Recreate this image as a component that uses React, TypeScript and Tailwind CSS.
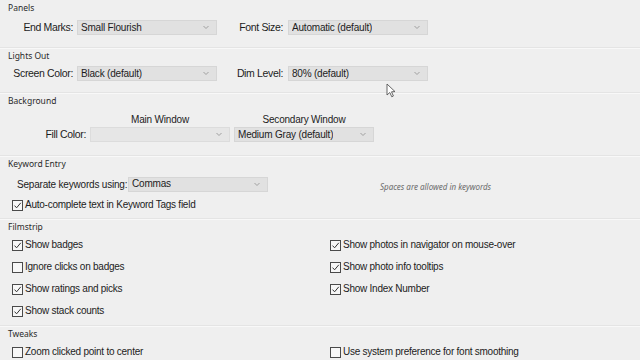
import React from "react"

const font = { fontFamily: '"Liberation Sans", Arial, sans-serif' }
const head = { fontFamily: '"Noto Sans", "Open Sans", sans-serif' }

function Chevron() {
  return (
    <svg width="8" height="5" viewBox="0 0 8 5" className="shrink-0">
      <path d="M1.5 1 L4 3.5 L6.5 1" fill="none" stroke="#a0a0a0" strokeWidth="1" />
    </svg>
  )
}

function Select({ value, w = "w-[140px]", disabled = false }: { value: string; w?: string; disabled?: boolean }) {
  return (
    <div
      className={`${w} h-[15px] shrink-0 flex items-center justify-between pl-[3px] pr-[6px] border ${
        disabled ? "bg-[#e6e6e6] border-[#dcdcdc]" : "bg-[#e1e1e1] border-[#d6d6d6]"
      }`}
    >
      <span className="text-[10px] tracking-[-0.2px] leading-none text-[#1c1c1c] truncate">{value}</span>
      <Chevron />
    </div>
  )
}

function Check({ checked, label }: { checked: boolean; label: string }) {
  return (
    <div className="h-[16px] flex items-center gap-[2px]">
      <div className="w-[11px] h-[11px] border border-[#4a4a4a] bg-[#f7f7f7] flex items-center justify-center">
        {checked && (
          <svg width="9" height="9" viewBox="0 0 9 9">
            <path d="M1.5 4.6 L3.6 6.8 L7.8 1.8" fill="none" stroke="#333" strokeWidth="1" />
          </svg>
        )}
      </div>
      <span className="text-[10px] tracking-[-0.25px] leading-none text-[#1c1c1c] whitespace-nowrap">{label}</span>
    </div>
  )
}

function Section({ title, h, children, first = false }: { title: string; h: string; children: React.ReactNode; first?: boolean }) {
  return (
    <div className={`${h} ${first ? "" : "border-t border-[#e4e4e4] shadow-[inset_0_1px_0_#f8f8f8]"}`}>
      <div className="h-[16px] pl-[8px] flex items-center text-[8.5px] text-[#2a2a2a]" style={head}>{title}</div>
      {children}
    </div>
  )
}

export default function App() {
  return (
    <div className="relative w-[640px] h-[360px] overflow-hidden bg-[#efefef] text-[#1c1c1c]" style={font}>
      <Section title="Panels" h="h-[47px]" first>
        <div className="mt-[4px] flex items-center text-[10.5px] tracking-[-0.35px]">
          <div className="w-[73px] text-right">End Marks:</div>
          <div className="ml-[4px]"><Select value="Small Flourish" /></div>
          <div className="w-[66px] text-right">Font Size:</div>
          <div className="ml-[5px]"><Select value="Automatic (default)" /></div>
        </div>
      </Section>

      <Section title="Lights Out" h="h-[45px]">
        <div className="mt-[2px] flex items-center text-[10.5px] tracking-[-0.35px]">
          <div className="w-[73px] text-right">Screen Color:</div>
          <div className="ml-[4px]"><Select value="Black (default)" /></div>
          <div className="w-[66px] text-right">Dim Level:</div>
          <div className="ml-[5px]"><Select value="80% (default)" /></div>
        </div>
      </Section>

      <Section title="Background" h="h-[63px]">
        <div className="mt-[3px] flex h-[14px] items-center text-[10px] tracking-[-0.2px]">
          <div className="w-[90px]" />
          <div className="w-[140px] text-center">Main Window</div>
          <div className="w-[4px]" />
          <div className="w-[140px] text-center">Secondary Window</div>
        </div>
        <div className="mt-[1px] flex items-center text-[10.5px] tracking-[-0.35px]">
          <div className="w-[86px] text-right">Fill Color:</div>
          <div className="ml-[4px]"><Select value="" disabled /></div>
          <div className="ml-[4px]"><Select value="Medium Gray (default)" /></div>
        </div>
      </Section>

      <Section title="Keyword Entry" h="h-[63px]">
        <div className="mt-[3px] flex items-center">
          <div className="pl-[17px] w-[128px] shrink-0 text-[10px] tracking-[-0.2px] whitespace-nowrap">Separate keywords using:</div>
          <Select value="Commas" />
          <div className="ml-[112px] mt-[6px] text-[8px] italic text-[#6b6b6b] whitespace-nowrap" style={head}>Spaces are allowed in keywords</div>
        </div>
        <div className="mt-[4px] pl-[12px]">
          <Check checked label="Auto-complete text in Keyword Tags field" />
        </div>
      </Section>

      <Section title="Filmstrip" h="h-[107px]">
        <div className="grid grid-cols-[318px_1fr] pl-[12px] mt-[2px] gap-y-[6px]">
          <Check checked label="Show badges" />
          <Check checked label="Show photos in navigator on mouse-over" />
          <Check checked={false} label="Ignore clicks on badges" />
          <Check checked label="Show photo info tooltips" />
          <Check checked label="Show ratings and picks" />
          <Check checked label="Show Index Number" />
          <Check checked label="Show stack counts" />
        </div>
      </Section>

      <Section title="Tweaks" h="h-[40px]">
        <div className="grid grid-cols-[318px_1fr] pl-[12px] mt-[2px]">
          <Check checked={false} label="Zoom clicked point to center" />
          <Check checked={false} label="Use system preference for font smoothing" />
        </div>
      </Section>

      <svg className="absolute left-[386px] top-[83px]" width="10" height="15" viewBox="0 0 10 15">
        <path d="M1 1 L1 12 L3.8 9.5 L5.8 13.8 L7.4 13 L5.5 8.8 L9 8.6 Z" fill="#fff" stroke="#555" strokeWidth="0.9" strokeLinejoin="round" />
      </svg>
    </div>
  )
}
